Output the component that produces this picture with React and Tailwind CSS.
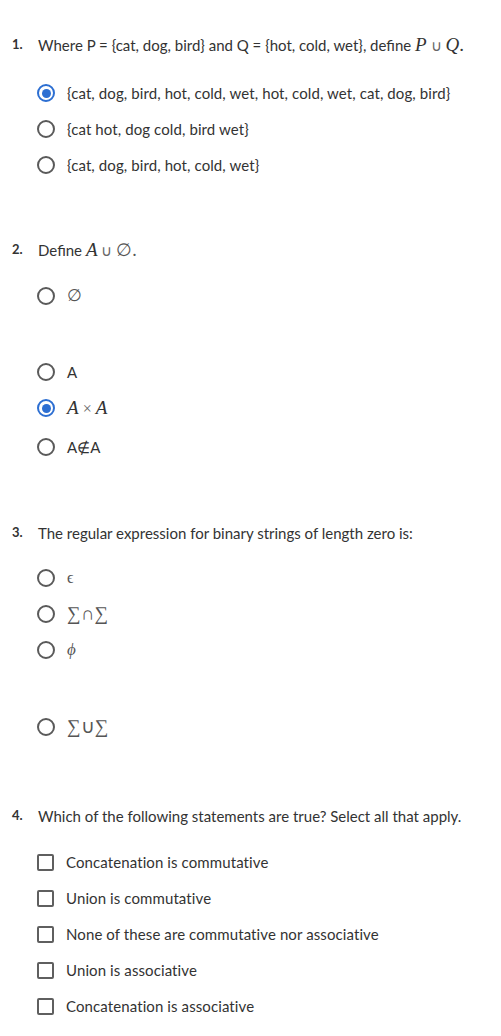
import React from 'react';

const font = { fontFamily: 'Lato, "Noto Sans", sans-serif' };

function Radio({ checked }) {
  return (
    <span
      className={`flex items-center justify-center w-[18px] h-[18px] rounded-full border-2 shrink-0 ${
        checked ? 'border-[#2d6fd2]' : 'border-[#5a5a5a]'
      }`}
    >
      {checked && <span className="w-[9px] h-[9px] rounded-full bg-[#2d6fd2]" />}
    </span>
  );
}

function Checkbox() {
  return <span className="w-[17px] h-[17px] border-2 border-[#5f5f5f] rounded-[2px] shrink-0" />;
}

function M({ children }) {
  return <span className="font-['Liberation_Serif',serif] italic text-[19px]">{children}</span>;
}

function Option({ checked, box, className = '', children }) {
  return (
    <div className={`flex items-center h-9 pl-[37px] ${className}`}>
      {box ? <Checkbox /> : <Radio checked={checked} />}
      <span className="ml-[12px] text-[15px] tracking-[0.1px] text-[#333]">{children}</span>
    </div>
  );
}

function Heading({ n, children }) {
  return (
    <div className="flex items-center h-5 pl-[12px] text-[15px] tracking-[0px] text-[#333]">
      <span className="w-[26px] font-bold text-[13px]">{n}.</span>
      <span>{children}</span>
    </div>
  );
}

export default function App() {
  return (
    <div className="bg-white w-[501px] min-h-[1036px] pt-[35px]" style={font}>
      <Heading n={1}>
        Where P = {'{'}cat, dog, bird{'}'} and Q = {'{'}hot, cold, wet{'}'}, define{' '}
        <M>P</M> <span className="font-['Liberation_Serif',serif] text-[15px] text-[#666]">∪</span> <M>Q</M>
        <span className="font-['Liberation_Serif',serif] text-[19px]">.</span>
      </Heading>
      <div className="mt-5">
        <Option checked>{'{'}cat, dog, bird, hot, cold, wet, hot, cold, wet, cat, dog, bird{'}'}</Option>
        <Option>{'{'}cat hot, dog cold, bird wet{'}'}</Option>
        <Option>{'{'}cat, dog, bird, hot, cold, wet{'}'}</Option>
      </div>

      <div className="mt-[57px]">
        <Heading n={2}>
          Define&nbsp;<M>A</M> <span className="font-['Liberation_Serif',serif] text-[15px] text-[#666]">∪</span>{' '}
          <span className="font-['Liberation_Serif',serif] text-[18px] text-[#555]">∅.</span>
        </Heading>
      </div>
      <div className="mt-[18px]">
        <Option className="mb-10">
          <span className="font-['Liberation_Serif',serif] text-[17px] text-[#555]">∅</span>
        </Option>
        <Option>A</Option>
        <Option checked>
          <M>A</M> <span className="font-['Liberation_Serif',serif] text-[16px] text-[#666]">×</span> <M>A</M>
        </Option>
        <Option className="mt-[3px]">A∉A</Option>
      </div>

      <div className="mt-[58px]">
        <Heading n={3}>The regular expression for binary strings of length zero is:</Heading>
      </div>
      <div className="mt-[17px]">
        <Option>
          <span className="font-['Liberation_Serif',serif] text-[16px] text-[#555]">ϵ</span>
        </Option>
        <Option>
          <span className="font-['Liberation_Serif',serif] text-[19px] text-[#555]">∑∩∑</span>
        </Option>
        <Option className="mb-[41px]">
          <span className="font-['Liberation_Serif',serif] italic text-[17px] text-[#555]">ϕ</span>
        </Option>
        <Option>
          <span className="font-['Liberation_Serif',serif] text-[19px] text-[#555]">∑∪∑</span>
        </Option>
      </div>

      <div className="mt-[61px]">
        <Heading n={4}>Which of the following statements are true? Select all that apply.</Heading>
      </div>
      <div className="mt-[18px]">
        <Option box>Concatenation is commutative</Option>
        <Option box>Union is commutative</Option>
        <Option box>None of these are commutative nor associative</Option>
        <Option box>Union is associative</Option>
        <Option box>Concatenation is associative</Option>
      </div>
    </div>
  );
}
